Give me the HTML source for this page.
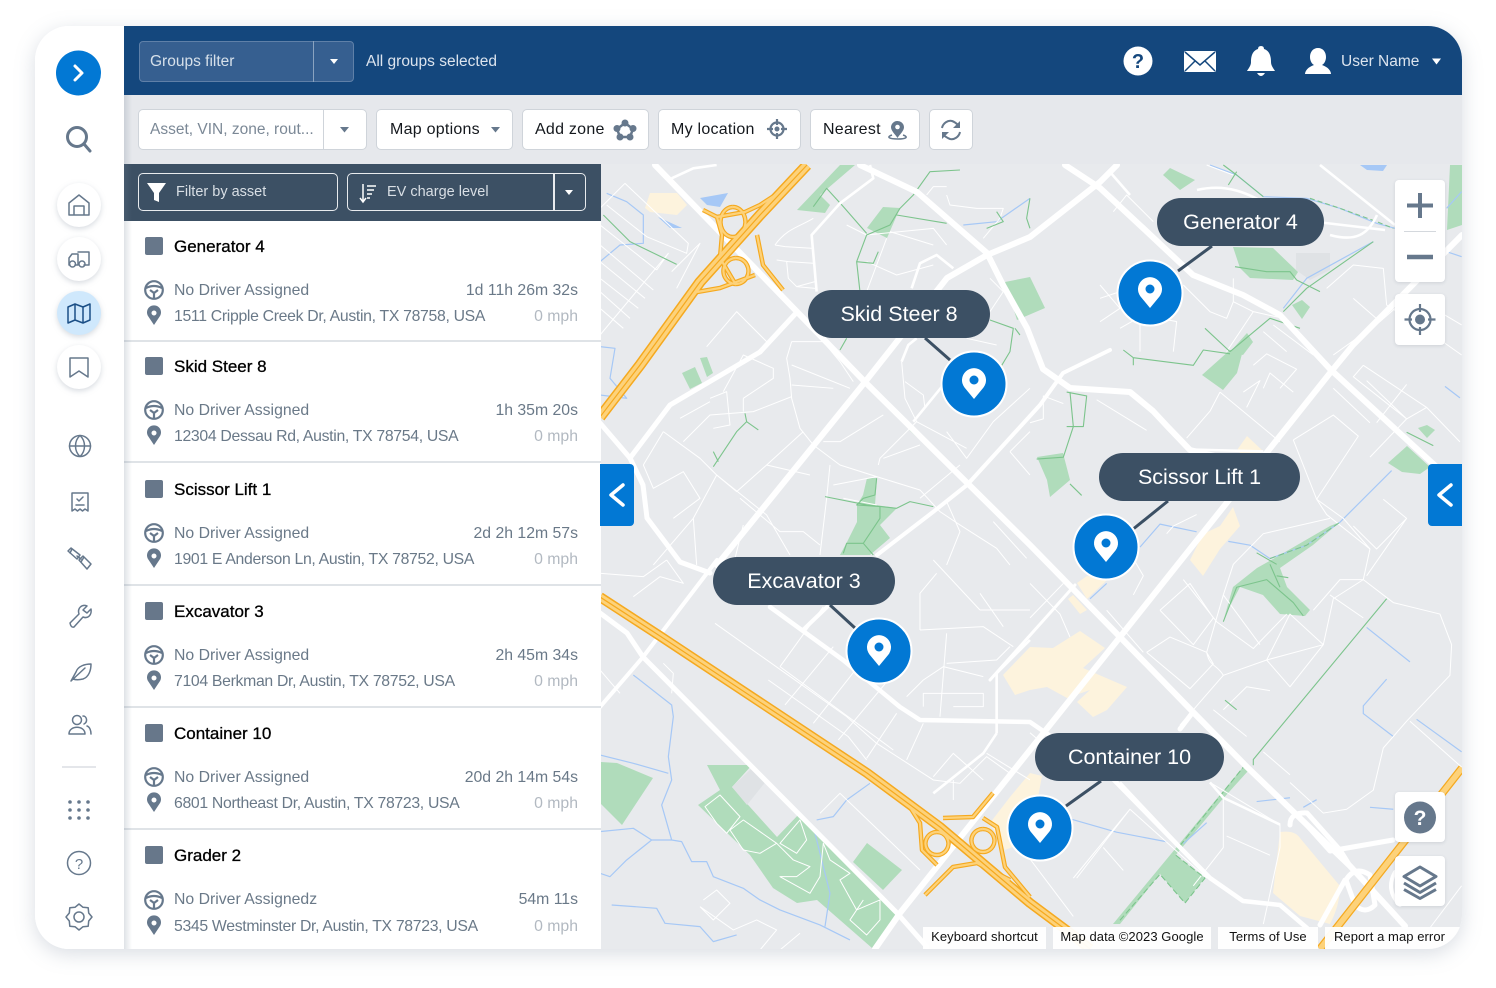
<!DOCTYPE html>
<html><head><meta charset="utf-8"><title>Map</title>
<style>
html,body{margin:0;padding:0;background:#fff}
body{width:1496px;height:988px;position:relative;overflow:hidden;font-family:"Liberation Sans",sans-serif}
#frame{position:absolute;left:35px;top:26px;width:1427px;height:923px;border-radius:34px;box-shadow:0 5px 20px rgba(110,125,145,.26)}
#clip{position:absolute;left:35px;top:26px;width:1427px;height:923px;border-radius:34px;overflow:hidden;background:#fff}
.a{position:absolute;white-space:nowrap;box-sizing:border-box}
svg{position:absolute;left:0;top:0}
path{vector-effect:non-scaling-stroke}
.btn{position:absolute;top:83px;height:41px;background:#fff;border:1.5px solid #cfd4da;border-radius:5px;box-sizing:border-box;font-size:16px;letter-spacing:.25px;line-height:40px;color:#14181d;white-space:nowrap}
.t{position:absolute;left:139px;margin-top:1px;font-size:17px;line-height:20px;color:#000;-webkit-text-stroke:.3px #000;white-space:nowrap}
.g{position:absolute;left:139px;margin-top:1px;font-size:15.8px;line-height:20px;color:#6a7988;white-space:nowrap}
.ad{letter-spacing:-.32px}
.r{position:absolute;right:884px;margin-top:1px;font-size:15.8px;line-height:20px;color:#6a7988;white-space:nowrap}
.m{color:#b2b9c1}
.cb{position:absolute;left:110px;width:18px;height:18px;background:#67778a;border-radius:2px}
.d{position:absolute;left:89px;width:477px;height:2px;background:#dfe3e7}
.pill{position:absolute;height:48px;border-radius:24px;background:#3c5064;color:#fff;font-size:21.5px;line-height:48px;text-align:center;white-space:nowrap}
.box{position:absolute;left:1360px;width:50px;background:#fff;border-radius:4px;box-shadow:0 1px 3px rgba(90,100,115,.18)}
.att{position:absolute;top:901px;height:22px;background:rgba(255,255,255,.95);font-size:13px;letter-spacing:.07px;line-height:20px;color:#111;text-align:center;white-space:nowrap}
</style></head><body>
<div id="frame"></div>
<div id="clip">
<!-- top bar -->
<div class="a" style="left:89px;top:0;width:1338px;height:69px;background:#14477d"></div>
<div class="a" style="left:104px;top:15px;width:215px;height:41px;background:#365f90;border:1px solid #5f80a8;border-radius:4px"></div>
<div class="a" style="left:278px;top:15px;width:1px;height:41px;background:#8aa3c0"></div>
<div class="a" style="left:115px;top:26px;font-size:15.5px;line-height:20px;color:#d6e0ea">Groups filter</div>
<div class="a" style="left:331px;top:26px;font-size:15.5px;line-height:20px;color:#dce4ee">All groups selected</div>
<div class="a" style="left:1306px;top:26px;font-size:15.5px;line-height:20px;color:#dce4ee">User Name</div>
<!-- toolbar -->
<div class="a" style="left:89px;top:69px;width:1338px;height:69px;background:#e6e8ec"></div>
<div class="btn" style="left:103px;width:229px;color:#7b8896;padding-left:11px;font-size:15.5px;letter-spacing:0">Asset, VIN, zone, rout...</div>
<div class="a" style="left:288px;top:83px;width:1px;height:41px;background:#cfd4da"></div>
<div class="btn" style="left:341px;width:137px;padding-left:13px">Map options</div>
<div class="btn" style="left:487px;width:127px;padding-left:12px">Add zone</div>
<div class="btn" style="left:623px;width:143px;padding-left:12px">My location</div>
<div class="btn" style="left:775px;width:110px;padding-left:12px">Nearest</div>
<div class="btn" style="left:894px;width:44px"></div>
<!-- panel -->
<div class="a" style="left:89px;top:138px;width:477px;height:57px;background:#3c5064"></div>
<div class="a" style="left:103px;top:147px;width:200px;height:38px;border:1.5px solid #e8ebee;border-radius:5px"></div>
<div class="a" style="left:312px;top:147px;width:239px;height:38px;border:1.5px solid #e8ebee;border-radius:5px"></div>
<div class="a" style="left:518px;top:147px;width:1.5px;height:38px;background:#e8ebee"></div>
<div class="a" style="left:141px;top:156px;font-size:14.5px;line-height:20px;color:#d9dfe5">Filter by asset</div>
<div class="a" style="left:352px;top:156px;font-size:14.5px;line-height:20px;color:#d9dfe5">EV charge level</div>
<div class="a" style="left:89px;top:195px;width:477px;height:728px;background:#fff"></div>

<div class="cb" style="top:211px"></div><div class="t" style="top:210px">Generator 4</div>
<div class="g" style="top:254px">No Driver Assigned</div><div class="r" style="top:254px">1d 11h 26m 32s</div>
<div class="g ad" style="top:280px">1511 Cripple Creek Dr, Austin, TX 78758, USA</div><div class="r m" style="top:280px">0 mph</div>
<div class="d" style="top:314px"></div>
<div class="cb" style="top:331px"></div><div class="t" style="top:330px">Skid Steer 8</div>
<div class="g" style="top:374px">No Driver Assigned</div><div class="r" style="top:374px">1h 35m 20s</div>
<div class="g ad" style="top:400px">12304 Dessau Rd, Austin, TX 78754, USA</div><div class="r m" style="top:400px">0 mph</div>
<div class="d" style="top:435px"></div>
<div class="cb" style="top:454px"></div><div class="t" style="top:453px">Scissor Lift 1</div>
<div class="g" style="top:497px">No Driver Assigned</div><div class="r" style="top:497px">2d 2h 12m 57s</div>
<div class="g ad" style="top:523px">1901 E Anderson Ln, Austin, TX 78752, USA</div><div class="r m" style="top:523px">0 mph</div>
<div class="d" style="top:558px"></div>
<div class="cb" style="top:576px"></div><div class="t" style="top:575px">Excavator 3</div>
<div class="g" style="top:619px">No Driver Assigned</div><div class="r" style="top:619px">2h 45m 34s</div>
<div class="g ad" style="top:645px">7104 Berkman Dr, Austin, TX 78752, USA</div><div class="r m" style="top:645px">0 mph</div>
<div class="d" style="top:680px"></div>
<div class="cb" style="top:698px"></div><div class="t" style="top:697px">Container 10</div>
<div class="g" style="top:741px">No Driver Assigned</div><div class="r" style="top:741px">20d 2h 14m 54s</div>
<div class="g ad" style="top:767px">6801 Northeast Dr, Austin, TX 78723, USA</div><div class="r m" style="top:767px">0 mph</div>
<div class="d" style="top:802px"></div>
<div class="cb" style="top:820px"></div><div class="t" style="top:819px">Grader 2</div>
<div class="g" style="top:863px">No Driver Assignedz</div><div class="r" style="top:863px">54m 11s</div>
<div class="g ad" style="top:890px">5345 Westminster Dr, Austin, TX 78723, USA</div><div class="r m" style="top:890px">0 mph</div>

<!-- map -->
<div class="a" style="left:566px;top:138px;width:861px;height:785px;background:#e8eaed;overflow:hidden">
<svg width="861" height="785" viewBox="601 164 861 785" style="left:0;top:0">
<defs>
<path id="h1" d="M600 417L640 365L700 282L760 215L807 165"/>
<path id="h2" d="M600 597L660 636L867 773L940 827L1030 903L1073 935L1090 949"/>
<path id="h3" d="M1462 768L1320 949"/>
</defs>
<!-- fills -->
<g fill="#fdf3dd">
<path d="M645 208L650 193L677 193L687 205L677 215L650 212Z"/>
<path d="M1190 560L1203 534L1220 526L1233 507L1240 526L1220 549L1203 576Z"/>
<path d="M1237 450L1247 436L1263 451L1250 462Z"/>
<path d="M1077 583L1087 576L1107 580L1087 599Z"/>
<path d="M1068 599L1073 595L1087 610L1080 614Z"/>
<path d="M1003 675L1030 647L1053 648L1080 631L1105 648L1083 668L1127 687L1107 710L1093 717L1077 702L1090 690L1067 698L1047 687L1030 690L1015 695Z"/>
<path d="M990 823L1010 797L1030 773L1042 776L1030 840L1005 850Z"/>
<path d="M1280 832Q1295 830 1300 838L1340 886Q1340 905 1330 924L1300 916L1273 893Z"/>
</g>
<g fill="#b0dcbb">
<path d="M797 210L840 165L855 165L820 195L830 205L825 213Z"/>
<path d="M867 228L883 207L900 208L887 238Z"/>
<path d="M1005 282L1030 277L1045 308L1017 320Z"/>
<path d="M682 373L695 367L702 383L690 389Z"/>
<path d="M700 358L707 357L713 373L707 377Z"/>
<path d="M867 478L877 478L875 505L897 508L880 525L890 538L870 555L840 555L847 542L857 522L857 505L863 495Z"/>
<path d="M1163 175L1170 168L1195 180L1180 190Z"/>
<path d="M1233 247L1273 248L1298 272L1293 280L1250 278L1240 268Z"/>
<path d="M1292 305L1302 300L1310 307L1302 319Z"/>
<path d="M1230 352L1247 333L1253 342L1243 355Z"/>
<path d="M1450 165H1462V225L1447 230Z"/>
<path d="M1037 457L1063 453L1070 480L1050 497L1047 480Z"/>
<path d="M1202 375L1230 350L1243 350L1237 373L1223 390Z"/>
<path d="M1388 463L1407 446L1430 467L1420 474L1402 472Z"/>
<path d="M1418 428L1427 425L1435 430L1427 438Z"/>
<path d="M1223 622L1233 587L1257 568L1273 559L1330 526L1340 522L1313 545L1280 568L1287 587L1310 610L1305 616L1280 614L1263 595L1240 587L1230 606Z"/>
<path d="M1113 924L1243 767L1248 771L1220 802L1160 874L1120 924Z"/>
<path d="M1173 853L1205 878L1185 903L1160 874Z"/>
<path d="M600 762L617 763L653 778L622 825L600 803Z"/>
<path d="M707 765L752 765L732 787L777 837L800 813L897 913L872 948L817 900L797 903L773 888L750 855L698 805L720 790Z"/>
<path d="M867 843L902 870L883 890L853 862Z"/>
</g>
<path fill="#dfe2e5" d="M732 787L753 767L767 780L747 805Z"/>
<path fill="#dfe2e5" d="M1296 253H1330V270L1310 280L1296 270Z"/>
<g fill="#a6c8f6">
<path d="M700 198L728 193L720 207L707 205Z"/>
<path d="M658 217L682 228L670 228Z"/>
<path d="M1360 165L1387 165L1383 171L1367 170Z"/>
</g>
<!-- water -->
<g fill="none" stroke="#a6c8f6" stroke-width="1.2" stroke-linejoin="round">
<g transform="translate(600,560) scale(.3333)">
<path d="M100 345L215 435L220 470L205 590L215 660L185 735L215 840L245 845L275 905L320 905L340 950L430 985L480 1020L540 1050L660 1095L750 1140"/>
<path d="M0 585L100 610L205 640M0 815L100 805L155 840L215 840M155 840L80 900L30 950L0 940M35 1035L170 1045L195 1090L300 1100L340 1145L410 1125"/>
<path d="M810 670L740 720L700 770L650 780M640 800L690 1000L675 1100"/>
</g>
<g transform="translate(600,165) scale(.3333)">
<path d="M20 85L80 110L130 150L130 235L60 240L0 290M0 545L45 550L30 640L80 700L0 690M1090 180L1190 170L1290 100"/>
</g>
<g transform="translate(1100,165) scale(.3333)">
<path d="M330 0L410 30L490 95L620 100L720 130L830 175L885 190M550 430L620 340L820 230M1040 260L1085 275M1040 130L1085 80"/>
</g>
<g transform="translate(1030,350) scale(.3333,.3827)">
<path d="M330 515L390 455L500 475M180 650L230 610M595 500L660 510L720 545L830 510L930 450L1085 315M1010 725L1140 815M1070 860L1000 930L1000 950L1090 1010M1160 965L1295 1050M120 1225L260 1260L410 1285M680 1180L780 1170M820 1195L860 1175M1020 1195L1090 1200M460 1290L530 1235M1245 95L1290 125"/>
</g>
</g>
<!-- minor streets -->
<g fill="none" stroke="#fff" stroke-width="1" stroke-linejoin="round">
<g transform="translate(600,165) scale(.3333)">
<path d="M0 510L205 265L170 315M75 55L265 235L260 265L140 215L20 120M75 55L0 130M0 180L170 315M0 240L160 375M0 290L135 400M0 340L115 430M0 380L90 460M0 430L70 490"/>
<path d="M525 240C560 190 600 185 640 160M525 240l30 5 85 5M530 285l35 5 80 5M560 290l5 50 25 25 55-15M590 365l55 5"/>
<path d="M320 545L410 440L500 530M215 320L300 235L230 370"/>
<path d="M740 180L800 210L1000 190L1040 240M800 290L890 330L1000 300M860 220L800 380L780 380M870 200L1000 240"/>
<path d="M1040 65L1000 65L980 90M1040 90L1050 120L1130 130L1190 130L1210 130L1200 160L1150 220M1170 340L1210 380L1170 440M1100 520L1190 540"/>
<path d="M575 530L670 530L720 590L760 650M575 600L750 670M575 660L700 670M575 530L560 580L570 640L575 700L600 790L640 840L720 900L830 935L960 975L1020 1040L1080 1080L1190 1150L1230 1200"/>
<path d="M190 800L300 880L350 930L500 1050L570 1170M130 900L190 800M250 830L330 750L460 740L575 695"/>
<path d="M330 700L380 680L390 780L340 790M430 700L520 640L520 610L430 570L370 680M430 700L430 740M130 900L160 970L250 920L300 1000L220 1060M240 760L330 710"/>
<path d="M160 1200L280 1060L350 930M280 1060L290 1200M400 1200L430 1080M350 930L410 980L500 900L610 800M500 900L630 930M420 1000L540 1100L610 1100L660 1140"/>
<path d="M680 1000L690 900M680 1000L660 1170M670 830L720 830L850 750M835 900L840 880L950 770M850 880L960 840M950 770L1100 850"/>
<path d="M905 590L915 700L950 770M915 650L970 690L975 730M1040 800L1100 880L1180 770L1290 670M960 1000L1080 900M1040 1010L1080 1100L1040 1200M1180 1070L1280 1180M1230 860L1290 800M1230 860L1290 930"/>
<path d="M700 960L830 935M730 1000L830 1020"/>
</g>
<g transform="translate(600,560) scale(.3333)">
<path d="M0 40L130 50L200 0M100 110L180 50L250 70L200 0M345 190L740 470L830 550L1000 660L1080 670L1160 590L1230 640"/>
<path d="M505 360L745 530L800 600M540 320L670 140M540 320L880 570M555 435L700 260M640 490L790 300M715 540L890 330M800 595L890 460"/>
<path d="M960 210L960 100L1010 40M960 210L1150 200L1240 260M1040 220L1020 470M1040 310L1190 300L1230 260M920 410L970 360L1030 320L1150 350M970 440L970 400L1150 400L1150 440L1060 440M1140 150L1290 150M1140 100L1210 200M1000 0L1140 150"/>
<path d="M920 600L970 490M1000 650L1060 580L1150 660M1160 580L1290 660M1060 660L1060 720M660 760L720 700L960 930"/>
<path d="M0 330L60 400M190 310L220 340L215 400"/>
<path d="M310 1020L350 990L390 1030L340 1080L300 1040M300 1040L400 1110L470 1080L530 1110L480 1170M540 1170L600 1120"/>
<path d="M315 740L360 705L420 770L380 820L350 790L315 740ZM390 810L430 780L530 850L480 880L430 870ZM540 850L600 780L620 840L590 880L540 850ZM530 850L580 900L630 920L590 950L540 950L630 1000L660 950L670 850L690 900L750 940L720 960L770 1050L840 1020L840 1080L800 1125L750 1080L790 1020"/>
</g>
<g transform="translate(1030,350) scale(.3333,.3827)">
<path d="M100 140L40 120L40 180L0 190M200 130L350 210M670 40L710 10L800 50L750 100M700 100L720 60L790 110M640 110L690 80L650 150M570 110L750 240M540 160L570 110M470 230L540 160M790 235L910 170L985 225L860 390L890 430L1020 520L1000 600L930 600L850 680M790 235L860 390"/>
<path d="M1000 40L970 70L1130 180L1190 150L1000 40M1130 90L1040 190M1190 150L1290 240M1010 80L1130 180L1020 280M910 100L1020 190M860 390L940 440L1020 520M1060 390L1130 440L1040 520L970 460M1130 440L1010 590"/>
<path d="M460 600L560 710L670 780L770 690M390 680L480 610L550 700L490 770L390 680M350 790L420 750L530 790M350 790L480 885L550 820L530 790L580 640L610 560L700 480L900 440M530 790C540 830 560 820 580 850L710 810L880 770L910 650L1000 600L1060 640L1090 660L1230 690L1265 770L1260 850L1130 970L1060 1040L1030 1150L950 1200L880 1210L780 1130"/>
<path d="M710 810L780 880L880 770L780 690L710 810M580 940L650 880L720 890M650 1010L550 940M580 850L450 980M580 640L690 770M900 640L1000 700"/>
<path d="M700 1050L780 1110M1140 970L1295 1090M0 1000L80 1060M0 700L100 610M0 610L90 690L120 750M340 790L230 680M0 1330L130 1480M140 1380L300 1200L530 1380M300 1200L130 1380M220 1300L280 1360M540 1130L750 1240L750 1300L700 1500M580 1170L580 1300L490 1400M590 1270L720 1320M1295 1400L1200 1510"/>
<path d="M300 530L340 590L310 640M410 480L430 460L500 430"/>
</g>
<g transform="translate(1100,165) scale(.3333)">
<path d="M0 360L60 430L0 470M40 140L80 90L160 170M0 400L60 380M250 360L330 440L380 460L400 410L460 440L380 560M460 440L550 460M400 340L400 410M120 480L120 560M60 490L130 450L230 470L220 560M680 370L760 300L850 310L860 420L1000 510L1085 570M760 400L840 470L700 570M840 470L920 400M950 400L1085 480M490 500L560 560M520 480L640 570M400 30L320 0"/>
</g>
</g>
<!-- trails -->
<g fill="none" stroke="#7cc48c" stroke-width="1.1" stroke-linejoin="round">
<g transform="translate(600,165) scale(.3333)">
<path d="M10 150L90 230L230 298M340 905L410 800L440 770L475 795M340 860L355 890M435 745L440 770M780 380L770 290L800 210L870 180L900 130L940 90L990 20L1080 15M770 290L820 295L835 260M640 125L680 70L730 125L800 205M890 150L1040 175M1170 465L1240 490L1230 560L1200 610M1245 490L1260 510M720 555L740 520M675 995L800 1020L890 1030L930 1010L1000 1025M830 940L825 990L790 1000L770 1020L840 1025L840 1060L790 1135L740 1135L730 1165M790 1135L820 1170M930 795L1010 870M1190 140L1210 170L1160 190M1290 100L1280 160L1290 190"/>
</g>
<g transform="translate(1100,165) scale(.3333)">
<path d="M370 0L410 30L490 95M410 20L385 60M405 305L500 320L570 320L590 345L660 380M550 440L620 370L820 230M315 490L390 560M390 560L510 460L600 490"/>
<path stroke-dasharray="5 3" d="M630 100L720 130L830 170L880 190"/>
</g>
<g transform="translate(1030,350) scale(.3333,.3827)">
<path d="M120 110L130 200L100 280L20 285M110 110L170 120L160 200L110 200M120 350L155 380M280 0L310 20L490 40L520 0L600 10M310 20L310 40M580 710L620 620L710 600L790 660L820 695M740 560L680 530M740 590L775 595M720 560L750 620M1070 650L670 1070L670 1085M585 915L620 940M1130 215L1210 250"/>
<path stroke-dasharray="6 3" d="M450 1295L640 1090M270 1490L390 1370L465 1445L525 1380L430 1315M720 545L830 510L930 450"/>
</g>
</g>
<!-- secondary -->
<g fill="none" stroke="#fff" stroke-width="2.6" stroke-linejoin="round">
<g transform="translate(600,165) scale(.3333)">
<path d="M650 380L635 210L720 115L820 40L810 0M935 370L960 295L1010 270L1060 310M905 590L925 540L950 520M940 770L1030 660M215 40L280 10L350 0"/>
</g>
<path d="M1320 165L1395 225M1197 190C1240 180 1262 205 1300 220L1385 230M1330 235C1355 242 1368 235 1377 215"/>
<path d="M1110 172L1130 195"/>
<g transform="translate(600,560) scale(.3333)"><path d="M1190 520L1190 340L1290 240M1190 520L1150 580L1000 700"/></g>
<g transform="translate(1030,350) scale(.3333,.3827)"><path d="M270 1130L540 1380M540 1130L580 1170L750 1240M480 260L700 265"/></g>
</g>
<!-- major -->
<g fill="none" stroke="#fff" stroke-linejoin="round" stroke-linecap="round">
<path stroke-width="6" d="M655 165L865 382L1030 545L1120 637L1193 712L1247 767L1303 821L1350 866L1405 926"/>
<path stroke-width="6" d="M717 565L865 382L947 278L987 255L1030 237L1100 182L1117 165"/>
<path stroke-width="6" d="M860 165L917 192L987 253L1003 285L1027 328L1043 369L1070 388L1130 392L1153 411L1167 426L1190 450L1215 456"/>
<path stroke-width="6" d="M1462 235L1353 345L1330 373L1120 637L1030 750L900 913L875 949"/>
<path stroke-width="6" d="M1065 165L1100 188L1143 228L1193 275L1243 295L1280 315L1330 369L1430 461L1462 490"/>
<path stroke-width="5" d="M600 423L630 458L643 485L647 518L680 562L710 573"/>
<path stroke-width="5" d="M630 458L670 405L760 352L797 312"/>
<path stroke-width="4" d="M717 560L643 657L600 707"/>
<path stroke-width="5" d="M600 613L627 633L643 657L897 913L927 947"/>
<path stroke-width="4.500" d="M770 607L843 660L900 707L920 720L1030 722L1113 779L1210 878L1243 901L1280 905L1307 928"/>
<path stroke-width="4" d="M803 630L827 607"/>
<path stroke-width="4" d="M877 555L933 512L967 485L1040 405L1063 373L1110 350"/>
<path stroke-width="3" d="M990 680L1075 585"/>
<path stroke-width="5" d="M1180 729L1193 712"/>
<path stroke-width="5" d="M1290 825Q1290 812 1307 813L1340 850L1350 866M1303 821L1330 851L1393 840M1346 880Q1355 865 1370 875L1375 905Q1365 915 1355 905ZM1320 925L1345 880"/>
<path stroke-width="4" d="M1437 885Q1420 860 1395 872Q1385 890 1400 905"/>
</g>
<!-- highways -->
<g fill="none" stroke-linejoin="round">
<g stroke="#f5a91f">
<use href="#h1" stroke-width="11"/><use href="#h2" stroke-width="10"/><use href="#h3" stroke-width="8"/>
<path stroke-width="4.500" d="M703 210L717 217L745 212L760 205L780 192M757 235L763 265L783 290M697 292L720 288L755 275M717 217L722 235L720 258L736 285M733 207A12.500 15 0 1 1 732.900 207M736 258A12.500 13 0 1 1 735.900 258"/>
<path stroke-width="4.500" d="M910 807L920 823L922 850L937 865M993 793L973 817L943 818M925 895L953 867L977 863L1010 880M983 818L997 827L1005 867L1030 897M937 832A11.500 11.500 0 1 1 936.900 832M983 829A11.500 11.500 0 1 1 982.900 829"/>
</g>
<g stroke="#fdd27a">
<use href="#h1" stroke-width="8"/><use href="#h2" stroke-width="7"/><use href="#h3" stroke-width="5.500"/>
<path stroke-width="2.200" d="M703 210L717 217L745 212L760 205L780 192M757 235L763 265L783 290M697 292L720 288L755 275M717 217L722 235L720 258L736 285M733 207A12.500 15 0 1 1 732.900 207M736 258A12.500 13 0 1 1 735.900 258"/>
<path stroke-width="2.200" d="M910 807L920 823L922 850L937 865M993 793L973 817L943 818M925 895L953 867L977 863L1010 880M983 818L997 827L1005 867L1030 897M937 832A11.500 11.500 0 1 1 936.900 832M983 829A11.500 11.500 0 1 1 982.900 829"/>
</g>
<g stroke="#f5a91f"><use href="#h1" stroke-width="1.200"/><use href="#h2" stroke-width="1.200"/></g>
</g>
<!-- connectors -->
<g stroke="#3c5064" stroke-width="3">
<path d="M1178 271L1212 246M950 360L925 338M1132 530L1168 501M855 628L830 605M1066 806L1101 781"/>
</g>
<!-- pins -->
<g>
<g transform="translate(1150,293)"><circle r="32.500" fill="#0278d4" stroke="#fff" stroke-width="2"/><path fill="#fff" d="M0 15L-9.500 3.500A12 12 0 1 1 9.500 3.500Z"/><circle cy="-4" r="4.500" fill="#0278d4"/></g>
<g transform="translate(974,384)"><circle r="32.500" fill="#0278d4" stroke="#fff" stroke-width="2"/><path fill="#fff" d="M0 15L-9.500 3.500A12 12 0 1 1 9.500 3.500Z"/><circle cy="-4" r="4.500" fill="#0278d4"/></g>
<g transform="translate(1106,547)"><circle r="32.500" fill="#0278d4" stroke="#fff" stroke-width="2"/><path fill="#fff" d="M0 15L-9.500 3.500A12 12 0 1 1 9.500 3.500Z"/><circle cy="-4" r="4.500" fill="#0278d4"/></g>
<g transform="translate(879,651)"><circle r="32.500" fill="#0278d4" stroke="#fff" stroke-width="2"/><path fill="#fff" d="M0 15L-9.500 3.500A12 12 0 1 1 9.500 3.500Z"/><circle cy="-4" r="4.500" fill="#0278d4"/></g>
<g transform="translate(1040,828)"><circle r="32.500" fill="#0278d4" stroke="#fff" stroke-width="2"/><path fill="#fff" d="M0 15L-9.500 3.500A12 12 0 1 1 9.500 3.500Z"/><circle cy="-4" r="4.500" fill="#0278d4"/></g>
</g>
</svg>
</div>
<div class="a" style="left:89px;top:69px;width:8px;height:854px;background:linear-gradient(90deg,rgba(110,125,145,.22),rgba(110,125,145,0))"></div>

<!-- pills -->
<div class="pill" style="left:1122px;top:172px;width:167px">Generator 4</div>
<div class="pill" style="left:773px;top:264px;width:182px">Skid Steer 8</div>
<div class="pill" style="left:1064px;top:427px;width:201px">Scissor Lift 1</div>
<div class="pill" style="left:678px;top:531px;width:182px">Excavator 3</div>
<div class="pill" style="left:1000px;top:707px;width:189px">Container 10</div>

<!-- tabs -->
<div class="a" style="left:565px;top:438px;width:34px;height:62px;background:#0278d4;border-radius:0 4px 4px 0"></div>
<div class="a" style="left:1393px;top:438px;width:34px;height:62px;background:#0278d4;border-radius:4px 0 0 4px"></div>

<!-- map controls -->
<div class="box" style="top:154px;height:102px"></div>
<div class="box" style="top:268px;height:51px"></div>
<div class="box" style="top:766px;height:50px"></div>
<div class="box" style="top:830px;height:50px"></div>

<!-- attribution -->
<div class="att" style="left:888px;width:123px">Keyboard shortcut</div>
<div class="att" style="left:1018px;width:158px">Map data ©2023 Google</div>
<div class="att" style="left:1183px;width:100px">Terms of Use</div>
<div class="att" style="left:1290px;width:129px;padding-right:8px">Report a map error</div>
</div>

<!-- icons overlay in page coordinates -->
<svg width="1496" height="988" viewBox="0 0 1496 988" style="pointer-events:none">
<!-- sidebar -->
<circle cx="78.500" cy="73" r="22.500" fill="#0278d4"/>
<path d="M75 66L82 73L75 80" fill="none" stroke="#fff" stroke-width="3" stroke-linecap="round" stroke-linejoin="round"/>
<g fill="none" stroke="#66788c" stroke-width="3" stroke-linecap="round"><circle cx="77" cy="137" r="9.500"/><path d="M84 144L90 151"/></g>
<g style="filter:drop-shadow(0 2px 3px rgba(110,125,145,.28))">
<circle cx="79" cy="205" r="22" fill="#fff"/><circle cx="79" cy="259" r="22" fill="#fff"/><circle cx="79" cy="313" r="22" fill="#cfe8fc"/><circle cx="79" cy="367" r="22" fill="#fff"/>
</g>
<g fill="none" stroke="#66788c" stroke-width="1.500" stroke-linejoin="round" stroke-linecap="round">
<path d="M69 203L79 195L89 203V215H69ZM74 215V206H84V215"/>
<path d="M78 252H89V265H84M75 265H78M69 265V258L72 254H78V265M69 265H70"/><circle cx="72.500" cy="264" r="3"/><circle cx="82" cy="264" r="3"/>
<path stroke="#1b4f86" d="M68 307L75 304L83 307L90 304V320L83 323L75 320L68 323ZM75 304V320M83 307V323"/>
<path d="M70 358H88V377L79 371L70 377Z"/>
<circle cx="80" cy="446" r="10.500"/><path d="M69.500 446H90.500M80 435.500C74 441 74 451 80 456.500C86 451 86 441 80 435.500"/>
<path d="M72 493H88V511L85 509L82.500 511L80 509L77.500 511L75 509L72 511ZM76 505H84M77 499L79 501L83 497"/>
<path d="M68 551L71 548L80 555L77 559ZM79 560L83 556L91 564L87 569ZM77 556L81 559M72 549L70 553M84 557L81 562"/>
<path d="M70 623L79 614C77 608 82 604 87 606L83 610L87 613L91 609C92 615 88 619 83 617L74 627Q71 628 70 623Z"/>
<path d="M71 681L76 672C78 666 85 664 91 664C91 670 89 677 83 679C79 680 76 680 73 679M71 681L85 668" />
<circle cx="77" cy="720" r="4.500"/><path d="M69 734C69 725 85 725 85 734ZM83 716C87 716 88 722 84 724M87 726C90 727 91 731 91 734"/>
<circle cx="79" cy="863" r="11.500"/>
<path d="M92 917L88.700 921L88.200 926.200L83 926.700L79 930L75 926.700L69.800 926.200L69.300 921L66 917L69.300 913L69.800 907.800L75 907.300L79 904L83 907.300L88.200 907.800L88.700 913Z"/><circle cx="79" cy="917" r="5"/>
</g>
<text x="79" y="869" font-family="Liberation Sans,sans-serif" font-size="15" fill="#66788c" text-anchor="middle">?</text>
<path d="M62 767H96" stroke="#c8ced5" stroke-width="1"/>
<g fill="#66788c"><circle cx="70" cy="802" r="1.800"/><circle cx="79" cy="802" r="1.800"/><circle cx="88" cy="802" r="1.800"/><circle cx="70" cy="810" r="1.800"/><circle cx="79" cy="810" r="1.800"/><circle cx="88" cy="810" r="1.800"/><circle cx="70" cy="818" r="1.800"/><circle cx="79" cy="818" r="1.800"/><circle cx="88" cy="818" r="1.800"/></g>
<!-- carets top -->
<g fill="#fff"><path d="M330 59H338L334 64ZM1432 58.500H1441L1436.500 64.500ZM565 190H573L569 195Z"/></g>
<g fill="#66788c"><path d="M340 127H349L344.500 132.500ZM491 127H500L495.500 132.500Z"/></g>
<!-- top right -->
<circle cx="1138" cy="61" r="14.500" fill="#fff"/>
<text x="1138" y="68" font-family="Liberation Sans,sans-serif" font-weight="bold" font-size="20" fill="#14477d" text-anchor="middle">?</text>
<rect x="1184" y="51" width="32" height="21" rx="2" fill="#fff"/>
<path d="M1185 52L1200 65L1215 52M1185 71L1195 61M1215 71L1205 61" fill="none" stroke="#14477d" stroke-width="1.500"/>
<path fill="#fff" d="M1261 46Q1264 46 1264 49C1270 51 1271 57 1271 62C1271 66 1274 69 1275 71H1247C1248 69 1251 66 1251 62C1251 57 1252 51 1258 49Q1258 46 1261 46ZM1257 73H1265Q1263 76 1261 76Q1259 76 1257 73Z"/>
<path fill="#fff" d="M1318 48C1323 48 1326 52 1326 57C1326 61 1324 64 1322 65C1328 67 1331 71 1331 74H1305C1305 71 1308 67 1314 65C1312 64 1310 61 1310 57C1310 52 1313 48 1318 48Z"/>
<!-- toolbar icons -->
<g fill="none" stroke="#66788c" stroke-width="2.500"><path d="M625 123L633 129L630 137H620L617 129Z"/></g>
<g fill="#66788c"><circle cx="625" cy="123" r="3.500"/><circle cx="633" cy="128.500" r="3.500"/><circle cx="630" cy="137" r="3.500"/><circle cx="620" cy="137" r="3.500"/><circle cx="617" cy="128.500" r="3.500"/></g>
<g fill="none" stroke="#66788c" stroke-width="2.200"><circle cx="777" cy="129" r="6.500"/><path d="M777 119V125M777 133V139M767 129H773M781 129H787"/></g>
<circle cx="777" cy="129" r="2.500" fill="#66788c"/>
<path fill="#66788c" d="M897 121A6.500 6.500 0 0 1 904 127C904 131 900 134 897.500 138C895 134 891 131 891 127A6.500 6.500 0 0 1 897 121Z"/>
<circle cx="897.500" cy="127" r="2.300" fill="#fff"/>
<path d="M892 135C886 137 889 139 898 139C906 139 909 137 903 135" fill="none" stroke="#66788c" stroke-width="1.500"/>
<path d="M942 128C943 123 948 120 952 121C955 122 957 124 958 125M960 132C959 137 954 140 950 139C947 138 945 136 943 135" fill="none" stroke="#66788c" stroke-width="2"/>
<path fill="#66788c" d="M960 121V128H953ZM942 139V132H949Z"/>
<!-- filter icons -->
<path fill="#fff" d="M147 183H166L159 193V202L154 200V193Z"/>
<path d="M363 184V201M360 198L363 202L366 198M367 186H376M367 190H374M367 194H372M367 198H370" fill="none" stroke="#fff" stroke-width="1.500"/>
<!-- list icons -->
<g fill="none" stroke="#66788c" stroke-width="2.200">
<circle cx="154" cy="290" r="8.800"/><path d="M146 288Q154 284 162 288M150 290L154 293L158 290M154 293V298"/>
<circle cx="154" cy="410" r="8.800"/><path d="M146 408Q154 404 162 408M150 410L154 413L158 410M154 413V418"/>
<circle cx="154" cy="533" r="8.800"/><path d="M146 531Q154 527 162 531M150 533L154 536L158 533M154 536V541"/>
<circle cx="154" cy="655" r="8.800"/><path d="M146 653Q154 649 162 653M150 655L154 658L158 655M154 658V663"/>
<circle cx="154" cy="777" r="8.800"/><path d="M146 775Q154 771 162 775M150 777L154 780L158 777M154 780V785"/>
<circle cx="154" cy="900" r="8.800"/><path d="M146 898Q154 894 162 898M150 900L154 903L158 900M154 903V908"/>
</g>
<g fill="#66788c" fill-rule="evenodd">
<path d="M154 325L148 316A7 7 0 1 1 160 316ZM154 310.500A2.500 2.500 0 1 0 154.010 310.500Z"/>
<path d="M154 445L148 436A7 7 0 1 1 160 436ZM154 430.500A2.500 2.500 0 1 0 154.010 430.500Z"/>
<path d="M154 568L148 559A7 7 0 1 1 160 559ZM154 553.500A2.500 2.500 0 1 0 154.010 553.500Z"/>
<path d="M154 690L148 681A7 7 0 1 1 160 681ZM154 675.500A2.500 2.500 0 1 0 154.010 675.500Z"/>
<path d="M154 812L148 803A7 7 0 1 1 160 803ZM154 797.500A2.500 2.500 0 1 0 154.010 797.500Z"/>
<path d="M154 935L148 926A7 7 0 1 1 160 926ZM154 920.500A2.500 2.500 0 1 0 154.010 920.500Z"/>
</g>
<!-- tab chevrons -->
<path d="M623 485L611 495L623 505M1451 485L1439 495L1451 505" fill="none" stroke="#fff" stroke-width="3.500" stroke-linecap="round" stroke-linejoin="round"/>
<!-- map controls -->
<path d="M1420 193V218M1407 205.500H1433" stroke="#66788c" stroke-width="4" fill="none"/>
<path d="M1404 231.500H1436" stroke="#d4d8dd" stroke-width="1"/>
<path d="M1407 257H1433" stroke="#66788c" stroke-width="4.500"/>
<g fill="none" stroke="#66788c" stroke-width="2.200"><circle cx="1420" cy="319.500" r="10.500"/><path d="M1420 304V312M1420 327V335M1404.500 319.500H1412M1428 319.500H1435.500"/></g>
<circle cx="1420" cy="319.500" r="5" fill="#66788c"/>
<circle cx="1420" cy="817.500" r="16" fill="#66788c"/>
<text x="1420" y="825" font-family="Liberation Sans,sans-serif" font-weight="bold" font-size="21" fill="#fff" text-anchor="middle">?</text>
<path d="M1420 867L1436 876.500L1420 886L1404 876.500Z" fill="none" stroke="#66788c" stroke-width="3" stroke-linejoin="round"/>
<path d="M1404 883L1420 892.500L1436 883M1404 889.500L1420 898.500L1436 889.500" fill="none" stroke="#66788c" stroke-width="3" stroke-linejoin="round"/>
</svg>
</body></html>
